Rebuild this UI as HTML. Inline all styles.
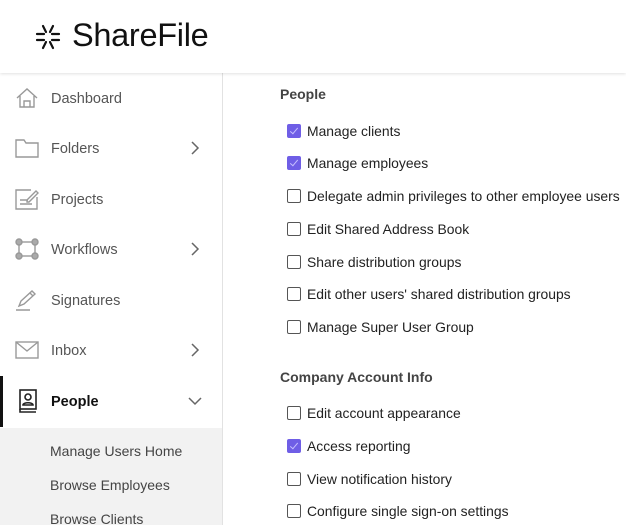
<!DOCTYPE html>
<html><head><style>
body{margin:0;width:626px;height:525px;overflow:hidden;background:#fff;font-family:"Liberation Sans",sans-serif;position:relative}
.hdr{position:absolute;left:0;top:0;width:626px;height:73px;background:#fff;box-shadow:0 1px 3px rgba(0,0,0,.12);z-index:2}
.logo{position:absolute;left:72px;top:17px;font-size:32.5px;color:#111;letter-spacing:-0.3px}
.side{position:absolute;left:0;top:73px;width:222px;height:452px;border-right:1px solid #e2e2e2}
.nav{position:absolute;left:0;width:222px;height:50px;font-size:14.5px;color:#555}
.nav .t{position:absolute;left:51px;top:50%;transform:translateY(-45%)}
.nav svg.i{position:absolute;left:15px;top:50%;transform:translateY(-50%)}
.chev{position:absolute;left:189px;top:50%;transform:translateY(-50%)}
.sub{position:absolute;left:0;top:428px;width:222px;height:97px;background:#f2f2f2}
.sub div{position:absolute;left:50px;font-size:14px;color:#444}
.main{position:absolute;left:280px;top:0}
.h{position:absolute;left:0;font-size:14px;font-weight:bold;color:#444;white-space:nowrap}
.row{position:absolute;left:7px;font-size:13.9px;color:#222;white-space:nowrap;height:20px}
.cb{position:absolute;left:0;top:1px;width:12px;height:12px;border:1.6px solid #555;border-radius:2px;background:#fff}
.cb.on{background:#6f5ee6;border-color:#6f5ee6}
.cb.on::after{content:"";position:absolute;left:4px;top:1px;width:3px;height:7px;border:solid #c8c0ff;border-width:0 1.2px 1.2px 0;transform:rotate(40deg)}
.row span{position:absolute;left:20px;top:0}
</style></head><body>
<div class="hdr">
<svg style="position:absolute;left:34px;top:23px" width="28" height="28" viewBox="0 0 28 28" fill="none" stroke="#111" stroke-width="2.2" stroke-linecap="round">
<path d="M3 11h7M18 11h7M3 17h7M18 17h7M9 3l3 6M19 3l-3 6M9 25l3-6M19 25l-3-6"/></svg>
<div class="logo">ShareFile</div>
</div>
<div class="side">
<div class="nav" style="top:0"><svg class="i" width="24" height="22" viewBox="0 0 24 22" fill="none" stroke="#999" stroke-width="1.4"><path d="M2 11L12 2l10 9M5 9v11h14V9M9 20v-6h6v6"/></svg><span class="t">Dashboard</span></div>
<div class="nav" style="top:50px"><svg class="i" width="24" height="20" viewBox="0 0 24 20" fill="none" stroke="#999" stroke-width="1.4"><path d="M1 2h8l2 3h12v14H1z"/></svg><span class="t">Folders</span><svg class="chev" width="12" height="16" viewBox="0 0 12 16" fill="none" stroke="#666" stroke-width="1.5"><path d="M3 2l6 6-6 6"/></svg></div>
<div class="nav" style="top:101px"><svg class="i" width="24" height="22" viewBox="0 0 24 22" fill="none" stroke="#999" stroke-width="1.4"><path d="M16 2H1v19h21V9M5 12h8M5 16h12M12 12l9-9 2 2-9 9h-2z"/></svg><span class="t">Projects</span></div>
<div class="nav" style="top:151px"><svg class="i" width="24" height="22" viewBox="0 0 24 22" fill="none" stroke="#999" stroke-width="1.4"><rect x="4" y="4" width="16" height="14"/><circle cx="4" cy="4" r="3" fill="#aaa"/><circle cx="20" cy="4" r="3" fill="#aaa"/><circle cx="4" cy="18" r="3" fill="#aaa"/><circle cx="20" cy="18" r="3" fill="#aaa"/></svg><span class="t">Workflows</span><svg class="chev" width="12" height="16" viewBox="0 0 12 16" fill="none" stroke="#666" stroke-width="1.5"><path d="M3 2l6 6-6 6"/></svg></div>
<div class="nav" style="top:202px"><svg class="i" width="24" height="22" viewBox="0 0 24 22" fill="none" stroke="#999" stroke-width="1.4"><path d="M1 21h14M4 17l2-5 11-10 3 3-11 10zM15 4l3 3"/></svg><span class="t">Signatures</span></div>
<div class="nav" style="top:252px"><svg class="i" width="24" height="18" viewBox="0 0 24 18" fill="none" stroke="#999" stroke-width="1.4"><rect x="1" y="1" width="22" height="16"/><path d="M1 1l11 9 11-9"/></svg><span class="t">Inbox</span><svg class="chev" width="12" height="16" viewBox="0 0 12 16" fill="none" stroke="#666" stroke-width="1.5"><path d="M3 2l6 6-6 6"/></svg></div>
<div class="nav" style="top:303px;color:#111;font-weight:bold"><div style="position:absolute;left:0;top:0;width:3px;height:51px;background:#111"></div><svg class="i" style="left:18px" width="20" height="24" viewBox="0 0 20 24" fill="none" stroke="#222" stroke-width="1.6"><rect x="2" y="1" width="16" height="19"/><path d="M2 20v3h16"/><circle cx="10" cy="8" r="3"/><path d="M5 16c0-3 10-3 10 0z"/></svg><span class="t">People</span><svg class="chev" style="left:187px" width="16" height="12" viewBox="0 0 16 12" fill="none" stroke="#666" stroke-width="1.5"><path d="M2 3l6 6 6-6"/></svg></div>
</div>
<div class="sub">
<div style="top:15px">Manage Users Home</div>
<div style="top:49px">Browse Employees</div>
<div style="top:83px">Browse Clients</div>
</div>
<div class="main">
<div class="h" style="top:86px">People</div>
<div class="row" style="top:123px"><div class="cb on"></div><span>Manage clients</span></div>
<div class="row" style="top:155px"><div class="cb on"></div><span>Manage employees</span></div>
<div class="row" style="top:188px"><div class="cb"></div><span>Delegate admin privileges to other employee users</span></div>
<div class="row" style="top:221px"><div class="cb"></div><span>Edit Shared Address Book</span></div>
<div class="row" style="top:254px"><div class="cb"></div><span>Share distribution groups</span></div>
<div class="row" style="top:286px"><div class="cb"></div><span>Edit other users' shared distribution groups</span></div>
<div class="row" style="top:319px"><div class="cb"></div><span>Manage Super User Group</span></div>
<div class="h" style="top:369px">Company Account Info</div>
<div class="row" style="top:405px"><div class="cb"></div><span>Edit account appearance</span></div>
<div class="row" style="top:438px"><div class="cb on"></div><span>Access reporting</span></div>
<div class="row" style="top:471px"><div class="cb"></div><span>View notification history</span></div>
<div class="row" style="top:503px"><div class="cb"></div><span>Configure single sign-on settings</span></div>
</div>
</body></html>
